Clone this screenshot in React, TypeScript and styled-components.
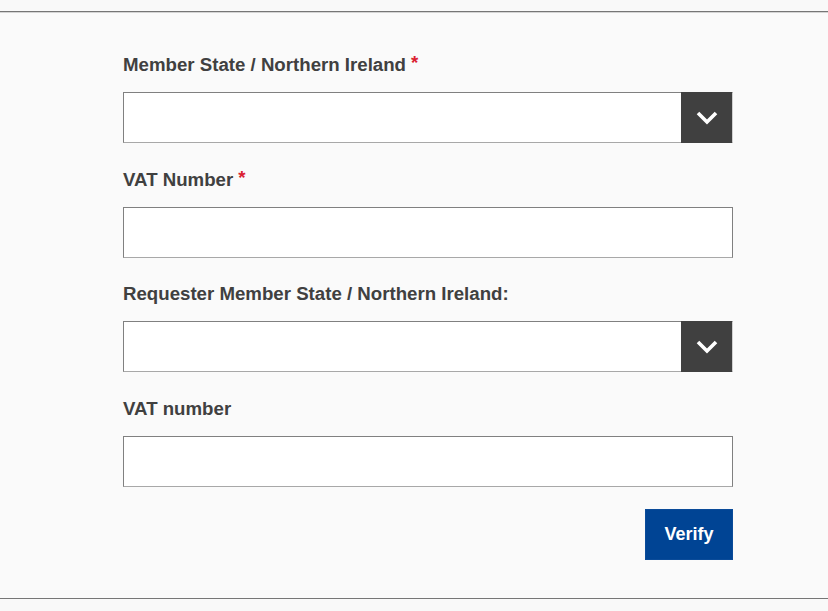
import styled, { createGlobalStyle } from "styled-components";

const fields = [
  { label: "Member State / Northern Ireland", required: true, kind: "select" },
  { label: "VAT Number", required: true, kind: "input" },
  { label: "Requester Member State / Northern Ireland:", required: false, kind: "select" },
  { label: "VAT number", required: false, kind: "input" },
];

function Chevron() {
  return (
    <svg width="22" height="14" viewBox="0 0 22 14" aria-hidden="true">
      <polyline
        points="2,2 11,11 20,2"
        fill="none"
        stroke="#ffffff"
        strokeWidth="3.6"
        strokeLinecap="butt"
        strokeLinejoin="miter"
      />
    </svg>
  );
}

function App() {
  return (
    <>
      <GlobalStyle />
      <Page>
        <Panel>
          <Form onSubmit={(e) => e.preventDefault()}>
            {fields.map((f) => (
              <Group key={f.label}>
                <Label>
                  {f.label}
                  {f.required && <Required>*</Required>}
                </Label>
                {f.kind === "select" ? (
                  <SelectBox>
                    <SelectValue />
                    <SelectButton type="button">
                      <Chevron />
                    </SelectButton>
                  </SelectBox>
                ) : (
                  <TextInput type="text" />
                )}
              </Group>
            ))}
            <Actions>
              <VerifyButton type="submit">Verify</VerifyButton>
            </Actions>
          </Form>
        </Panel>
      </Page>
    </>
  );
}

export default App;

const GlobalStyle = createGlobalStyle`
  html, body {
    margin: 0;
    padding: 0;
    background: #f9f9f9;
  }
  body {
    font-family: "Liberation Sans", Arial, sans-serif;
  }
`;

const Page = styled.div`
  width: 828px;
  height: 611px;
  padding-top: 11px;
  box-sizing: border-box;
`;

const Panel = styled.div`
  height: 588px;
  box-sizing: border-box;
  background: #fafafa;
  border-top: 1px solid #767676;
  border-bottom: 1px solid #767676;
  box-shadow: inset 0 1px 0 #d4d4d4;
`;

const Form = styled.form`
  width: 610px;
  margin-left: 123px;
  padding-top: 41px;
  display: flex;
  flex-direction: column;
`;

const Group = styled.div`
  display: flex;
  flex-direction: column;
  margin-bottom: 24.5px;
`;

const Label = styled.label`
  font-size: 18.67px;
  line-height: 24px;
  font-weight: 700;
  color: #404040;
  margin-bottom: 15px;
`;

const Required = styled.span`
  color: #da2131;
  margin-left: 5px;
  line-height: 0;
  vertical-align: 2px;
`;

const SelectBox = styled.div`
  display: flex;
  height: 51px;
  box-sizing: border-box;
  border: 1px solid #808080;
  border-bottom-color: #a8a8a8;
  border-right-color: #d0d0d0;
  background: #ffffff;
`;

const SelectValue = styled.div`
  flex: 1;
`;

const SelectButton = styled.button`
  width: 51px;
  margin: -1px 0;
  border: none;
  padding: 0;
  background: #404040;
  display: flex;
  align-items: center;
  justify-content: center;
  cursor: pointer;
`;

const TextInput = styled.input`
  height: 51px;
  box-sizing: border-box;
  border: 1px solid #808080;
  border-bottom-color: #a8a8a8;
  background: #ffffff;
  outline: none;
  padding: 0 12px;
  font-size: 16px;
`;

const Actions = styled.div`
  display: flex;
  justify-content: flex-end;
  margin-top: -2px;
`;

const VerifyButton = styled.button`
  width: 88px;
  height: 51px;
  border: 1px solid #0a4b99;
  background: #004494;
  color: #ffffff;
  font-family: "Liberation Sans", Arial, sans-serif;
  font-size: 18px;
  font-weight: 700;
  cursor: pointer;
`;
